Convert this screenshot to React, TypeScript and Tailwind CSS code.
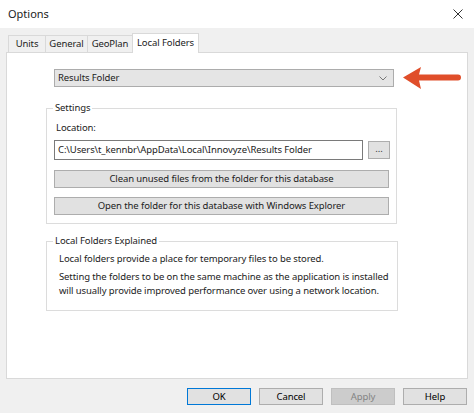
import React from 'react';

const tabs = [
  { label: 'Units', w: 'w-[37px]' },
  { label: 'General', w: 'w-[42px]' },
  { label: 'GeoPlan', w: 'w-[45px]' },
];

const WinButton: React.FC<{ label: string; primary?: boolean; disabled?: boolean }> = ({
  label,
  primary,
  disabled,
}) => {
  return (
    <button
      disabled={disabled}
      className={
        primary
          ? 'w-[64px] h-[17px] border border-[#0078d7] bg-[#e1e1e1] text-black leading-none'
          : disabled
          ? 'w-[64px] h-[17px] border border-[#bfbfbf] bg-[#cccccc] text-[#838383] leading-none'
          : 'w-[64px] h-[17px] border border-[#adadad] bg-[#e1e1e1] text-black leading-none'
      }
    >
      {label}
    </button>
  );
};

export default function App() {
  return (
    <div className="w-[474px] h-[413px] bg-[#f0f0f0] flex flex-col text-[9.5px] tracking-[-0.1px] text-black font-['Noto_Sans',sans-serif]">
      {/* title bar */}
      <div className="h-[28px] bg-white flex items-center justify-between pl-[8px] pr-[11px]">
        <span className="text-[11px] tracking-normal text-[#222]">Options</span>
        <svg width="10" height="10" viewBox="0 0 10 10">
          <path d="M0.5 0.5 L9.5 9.5 M9.5 0.5 L0.5 9.5" stroke="#333" strokeWidth="1" />
        </svg>
      </div>

      {/* tabs */}
      <div className="mt-[5px] ml-[8px] flex items-end h-[19px]">
        {tabs.map((t) => (
          <div
            key={t.label}
            className={`${t.w} h-[17px] border border-b-0 border-r-0 border-[#d9d9d9] bg-[#f0f0f0] flex items-center justify-center text-[#222]`}
          >
            {t.label}
          </div>
        ))}
        <div className="w-[67px] h-[20px] -mb-[1px] relative z-10 border border-b-0 border-[#d9d9d9] bg-white flex items-center justify-center text-[#222]">
          Local Folders
        </div>
      </div>

      {/* panel */}
      <div className="ml-[6px] w-[462px] h-[327px] border border-[#d9d9d9] bg-white pt-[16px] pl-[39px] flex flex-col">
        <div className="flex items-center h-[18px]">
          <div className="ml-[8px] w-[340px] h-[18px] border border-[#acacac] bg-[#e5e5e5] flex items-center justify-between pl-[3px] pr-[6px] text-[#222]">
            <span>Results Folder</span>
            <svg width="8" height="5" viewBox="0 0 8 5">
              <path d="M0.5 0.5 L4 4 L7.5 0.5" fill="none" stroke="#777" strokeWidth="1" />
            </svg>
          </div>
          <svg className="ml-[8px] shrink-0" width="60" height="24" viewBox="0 0 60 24">
            <path
              d="M1 11.5 L19 1 L17 8.5 L56 8.5 Q59 8.5 59 11.5 Q59 14.5 56 14.5 L17 14.5 L19 23 Z"
              fill="#e04e2a"
            />
          </svg>
        </div>

        <fieldset className="mt-[13px] w-[351px] border border-[#dcdcdc] pl-[7px] pr-[6px] pb-[8px]">
          <legend className="-ml-[1px] px-[2px] leading-[16px] text-[#222]">Settings</legend>
          <div className="mt-[4px] ml-[2px] leading-[16px] text-[#222]">Location:</div>
          <div className="mt-[4px] flex items-center">
            <div className="w-[309px] h-[20px] border border-[#7a7a7a] bg-white flex items-center pl-[3px] text-[#222] whitespace-nowrap">
              C:\Users\t_kennbr\AppData\Local\Innovyze\Results Folder
            </div>
            <button className="ml-[5px] w-[22px] h-[18px] border border-[#adadad] bg-[#e1e1e1] leading-none text-[#333] pb-[3px]">
              ...
            </button>
          </div>
          <button className="mt-[10px] w-[335px] h-[18px] border border-[#adadad] bg-[#e1e1e1] leading-none text-[#222]">
            Clean unused files from the folder for this database
          </button>
          <button className="mt-[9px] w-[335px] h-[18px] border border-[#adadad] bg-[#e1e1e1] leading-none text-[#222]">
            Open the folder for this database with Windows Explorer
          </button>
        </fieldset>

        <fieldset className="mt-[9px] w-[352px] border border-[#dcdcdc] pl-[12px] pr-[6px] pb-[12px] leading-[14px] text-[#222] whitespace-nowrap">
          <legend className="-ml-[6px] px-[2px] leading-[16px]">Local Folders Explained</legend>
          <p className="mt-[3px]">Local folders provide a place for temporary files to be stored.</p>
          <p className="mt-[4px]">
            Setting the folders to be on the same machine as the application is installed
            <br />
            will usually provide improved performance over using a network location.
          </p>
        </fieldset>
      </div>

      {/* dialog buttons */}
      <div className="mt-[9px] flex justify-end gap-[8px] pr-[7px]">
        <WinButton label="OK" primary />
        <WinButton label="Cancel" />
        <WinButton label="Apply" disabled />
        <WinButton label="Help" />
      </div>
    </div>
  );
}
